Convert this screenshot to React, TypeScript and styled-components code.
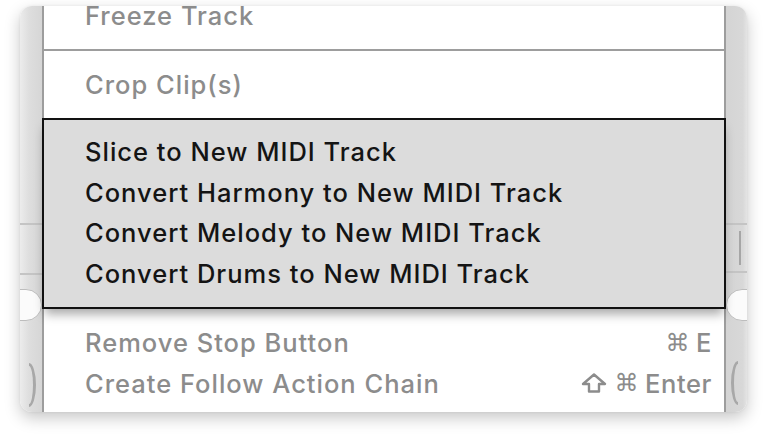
import styled, { createGlobalStyle } from 'styled-components';

const GlobalStyle = createGlobalStyle`
    html, body {
        margin: 0;
        background: #ffffff;
    }
`;

const Stage = styled.div`
    width: 768px;
    height: 445px;
    padding: 6px 21px 0 20px;
    box-sizing: border-box;
    font-family: Inter, 'Open Sans', sans-serif;
`;

const Card = styled.div`
    display: flex;
    height: 406px;
    border-radius: 12px;
    box-shadow: 0 6px 16px rgba(0, 0, 0, 0.22), 0 0 3px rgba(0, 0, 0, 0.06);
`;

const Gutter = styled.div<{ $side: 'left' | 'right' }>`
    width: ${({ $side }) => ($side === 'left' ? 22 : 21)}px;
    display: flex;
    flex-direction: column;
    overflow: hidden;
    align-items: ${({ $side }) => ($side === 'left' ? 'flex-end' : 'flex-start')};
    border-radius: ${({ $side }) => ($side === 'left' ? '12px 0 0 12px' : '0 12px 12px 0')};
    background: ${({ $side }) =>
        $side === 'left'
            ? 'linear-gradient(90deg, #ececec 0%, #dedede 40%, #d6d6d6 100%)'
            : 'linear-gradient(90deg, #d4d4d4 0%, #d8d8d8 80%, #e4e4e4 100%)'};
`;

const GutterRule = styled.div<{ $top: number }>`
    margin-top: ${({ $top }) => $top}px;
    width: 100%;
    height: 2px;
    flex-shrink: 0;
    background: #c4c4c4;
`;

const Knob = styled.div<{ $side: 'left' | 'right'; $top: number }>`
    margin-top: ${({ $top }) => $top}px;
    width: 22px;
    height: 30px;
    flex-shrink: 0;
    background: #fbfbfb;
    border: 1px solid #bdbdbd;
    border-radius: ${({ $side }) => ($side === 'left' ? '0 16px 16px 0' : '16px 0 0 16px')};
`;

const Arc = styled.div<{ $side: 'left' | 'right'; $top: number }>`
    margin-top: ${({ $top }) => $top}px;
    width: 14px;
    height: 44px;
    flex-shrink: 0;
    box-sizing: border-box;
    border: 3px solid #a8a8a8;
    border-radius: 50%;
    ${({ $side }) =>
        $side === 'left'
            ? 'margin-right: 6px; clip-path: inset(0 0 0 50%);'
            : 'margin-left: 5px; clip-path: inset(0 50% 0 0);'}
`;

const Slider = styled.div`
    margin: 6px 0 0 13px;
    width: 2px;
    height: 34px;
    flex-shrink: 0;
    background: #a6a6a6;
`;

const Menu = styled.div`
    flex: 1;
    display: flex;
    flex-direction: column;
    background: #ffffff;
    border-left: 2px solid #9d9d9d;
    border-right: 2px solid #9d9d9d;
`;

const Item = styled.div<{ $disabled?: boolean }>`
    height: 40.5px;
    flex-shrink: 0;
    display: flex;
    align-items: center;
    justify-content: space-between;
    padding: 0 12px 0 41px;
    font-size: 25.5px;
    font-weight: 500;
    letter-spacing: 1px;
    color: ${({ $disabled }) => ($disabled ? '#8c8c8c' : '#141414')};
`;

const FreezeItem = styled(Item)`
    height: 20px;
    line-height: 20px;
`;

const Separator = styled.div`
    height: 2px;
    margin: 23px 0 13px;
    background: #9d9d9d;
`;

const Highlight = styled.div`
    margin: 13px -2px 14px;
    padding: 12px 0 13px;
    background: #dcdcdc;
    border: 2px solid #111111;
    box-shadow: 0 8px 10px -3px rgba(0, 0, 0, 0.35);
    position: relative;
    z-index: 1;
`;

const Shortcut = styled.span`
    display: flex;
    align-items: center;
    gap: 6px;
    letter-spacing: 0.6px;
    color: #8c8c8c;
`;

const Glyph = styled.span`
    font-family: 'DejaVu Sans', sans-serif;
    font-size: 24px;
    font-weight: 400;
`;

const ShiftIcon = () => (
    <svg width="28" height="22" viewBox="0 0 28 22" fill="none">
        <path
            d="M14 2.5 L25 12 H19 V19.5 H9 V12 H3 Z"
            stroke="#8c8c8c"
            strokeWidth="2.4"
            strokeLinejoin="round"
        />
    </svg>
);

export default function App() {
    return (
        <>
            <GlobalStyle />
            <Stage>
                <Card>
                    <Gutter $side="left">
                        <GutterRule $top={217} />
                        <GutterRule $top={48} />
                        <Knob $side="left" $top={14} />
                        <Arc $side="left" $top={42} />
                    </Gutter>
                    <Menu>
                        <FreezeItem $disabled>Freeze Track</FreezeItem>
                        <Separator />
                        <Item $disabled>Crop Clip(s)</Item>
                        <Highlight>
                            <Item>Slice to New MIDI Track</Item>
                            <Item>Convert Harmony to New MIDI Track</Item>
                            <Item>Convert Melody to New MIDI Track</Item>
                            <Item>Convert Drums to New MIDI Track</Item>
                        </Highlight>
                        <Item $disabled>
                            Remove Stop Button
                            <Shortcut>
                                <Glyph>⌘</Glyph>E
                            </Shortcut>
                        </Item>
                        <Item $disabled>
                            Create Follow Action Chain
                            <Shortcut>
                                <ShiftIcon />
                                <Glyph>⌘</Glyph>Enter
                            </Shortcut>
                        </Item>
                    </Menu>
                    <Gutter $side="right">
                        <GutterRule $top={217} />
                        <Slider />
                        <GutterRule $top={6} />
                        <Knob $side="right" $top={16} />
                        <Arc $side="right" $top={40} />
                    </Gutter>
                </Card>
            </Stage>
        </>
    );
}
